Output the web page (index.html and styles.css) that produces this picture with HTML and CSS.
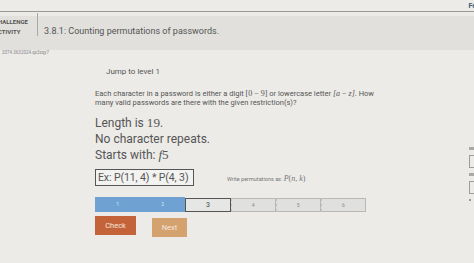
FILE: index.html
```html
<!DOCTYPE html>
<html>
<head>
  <title>Challenge Activity</title>
  <link rel="stylesheet" href="styles.css">
</head>
<body>
  <div class="topbar">
    <span class="fe">Fe</span>
  </div>
  <div class="header">
    <div class="tag">HALLENGE<br>CTIVITY</div>
    <div class="title">3.8.1: Counting permutations of passwords.</div>
  </div>
  <div class="code">3374.3632024.qx3zqy7</div>

  <div class="main">
    <div class="jump">Jump to level 1</div>
    <p class="question">Each character in a password is either a digit <span class="math">[0 &minus; 9]</span> or lowercase letter <span class="math"><i>[a</i> &minus; <i>z]</i></span>. How many valid passwords are there with the given restriction(s)?</p>

    <div class="rules">
      <div>Length is <span class="math">19</span>.</div>
      <div>No character repeats.</div>
      <div>Starts with: <span class="math"><i>f</i>5</span></div>
    </div>

    <div class="answer-row">
      <div class="answer">Ex: P(11, 4) * P(4, 3)</div>
      <div class="hint">Write permutations as: <span class="math"><i>P</i>(<i>n</i>, <i>k</i>)</span></div>
    </div>

    <div class="levels">
      <div class="lvl done">1</div>
      <div class="lvl done">2</div>
      <div class="lvl current">3</div>
      <div class="lvl">4</div>
      <div class="lvl">5</div>
      <div class="lvl">6</div>
    </div>

    <div class="buttons">
      <button class="check">Check</button>
      <button class="next">Next</button>
    </div>
  </div>

  <div class="side">
    <div class="bar"></div>
    <div class="box"></div>
    <div class="bar"></div>
    <div class="box"></div>
    <div class="dot"></div>
  </div>
</body>
</html>
```

FILE: styles.css
```css
body {
  margin: 0;
  padding: 0;
  font-family: Roboto, 'Liberation Sans', sans-serif;
  background-color: #ecebe8;
  color: #444;
  width: 474px;
  height: 263px;
  overflow: hidden;
  position: relative;
}

.topbar {
  height: 11px;
  border-bottom: 1px solid #9a9a98;
  display: flex;
  justify-content: flex-end;
  align-items: flex-end;
}

.fe {
  font-size: 7px;
  font-weight: bold;
  color: #3b5a7a;
  margin-right: -2px;
  margin-bottom: 1px;
}

.header {
  margin-top: 4px;
  height: 34px;
  background-color: #e1e0dc;
  display: flex;
  align-items: flex-start;
}

.tag {
  font-size: 6px;
  font-weight: bold;
  line-height: 10px;
  color: #555;
  margin-left: -2px;
  width: 39px;
  height: 19px;
  border-right: 1px solid #a8a8a4;
  margin-top: -3px;
  padding-top: 4px;
}

.title {
  font-size: 9px;
  color: #555;
  margin-left: 6px;
  margin-top: 10px;
}

.code {
  font-size: 4.5px;
  color: #888;
  margin: 0 0 0 2px;
  height: 10px;
}

.main {
  margin-left: 95px;
  width: 275px;
}

.jump {
  font-size: 8px;
  color: #555;
  margin-left: 11px;
  margin-top: 7px;
}

.question {
  font-size: 7.5px;
  line-height: 9px;
  color: #555;
  margin: 13px 0 0 0;
  width: 290px;
}

.question .math {
  font-family: 'Liberation Serif', 'DejaVu Serif', serif;
  font-size: 8px;
  line-height: 9px;
}

.math {
  font-family: 'Liberation Serif', 'DejaVu Serif', serif;
  font-size: 1.1em;
}

.rules {
  margin-top: 8px;
  font-size: 12px;
  line-height: 15.5px;
  color: #555;
}

.answer-row {
  display: flex;
  align-items: center;
  margin-top: 5px;
}

.answer {
  width: 95px;
  height: 15px;
  border: 1.5px solid #555;
  background-color: #f2f2f0;
  font-size: 10.5px;
  letter-spacing: -0.1px;
  line-height: 15px;
  padding-left: 2px;
  color: #555;
  white-space: nowrap;
  overflow: hidden;
}

.hint {
  font-size: 5.5px;
  color: #777;
  margin-left: 33px;
  margin-top: 2px;
}

.hint .math {
  font-size: 8px;
}

.levels {
  display: flex;
  margin-top: 11px;
  height: 15px;
  width: 271px;
}

.lvl {
  flex: 1;
  font-size: 5px;
  color: #888;
  background-color: #e0e0de;
  border: 1px solid #b8b8b6;
  border-left: 1px dashed #c4c4c2;
  display: flex;
  align-items: center;
  justify-content: center;
  margin-top: 1px;
}

.lvl.done {
  background-color: #6fa2d2;
  border-color: #6fa2d2;
  color: #dce8f4;
  margin-top: 0;
}

.lvl.current {
  border: 1.5px solid #555;
  color: #444;
  font-size: 7px;
  background-color: #e6e6e4;
}

.buttons {
  display: flex;
  gap: 16px;
  margin-top: 4px;
}

button {
  border: none;
  font-family: Roboto, 'Liberation Sans', sans-serif;
  font-size: 7.5px;
  color: #f4e6dc;
  height: 19px;
  padding: 0;
}

.check {
  width: 41px;
  background-color: #c4623a;
}

.next {
  width: 35px;
  background-color: #d4a26e;
  margin-top: 2px;
}

.side {
  position: absolute;
  right: -6px;
  top: 147px;
  display: flex;
  flex-direction: column;
  align-items: flex-start;
  gap: 5px;
}

.side .bar {
  width: 6px;
  height: 3px;
  background-color: #a9a9a7;
}

.side .box {
  width: 9px;
  height: 11px;
  border: 1px solid #9d9d9b;
}

.side .dot {
  width: 2px;
  height: 2px;
  background-color: #999;
}
```
